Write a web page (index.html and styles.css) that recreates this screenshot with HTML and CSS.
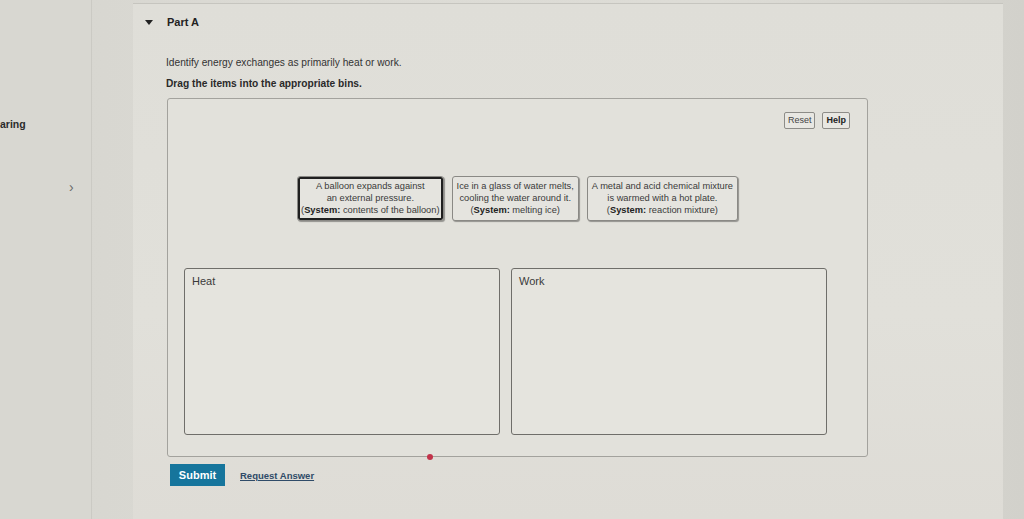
FILE: index.html
```html
<!DOCTYPE html>
<html>
<head>
<meta charset="utf-8">
<link rel="stylesheet" href="styles.css">
</head>
<body>
<div class="page">
  <aside class="sidebar">
    <div class="side-title">aring</div>
    <div class="side-chevron">&#8250;</div>
  </aside>
  <main class="main">
    <section class="part">
      <header class="part-head">
        <span class="tri"></span>
        <span class="part-title">Part A</span>
      </header>
      <div class="part-body">
        <p class="instr">Identify energy exchanges as primarily heat or work.</p>
        <p class="instr strong">Drag the items into the appropriate bins.</p>
        <div class="panel">
          <div class="toolbar">
            <button class="tbtn">Reset</button>
            <button class="tbtn bold">Help</button>
          </div>
          <div class="cards">
            <div class="card selected">A balloon expands against<br>an external pressure.<br>(<b>System:</b> contents of the balloon)</div>
            <div class="card">Ice in a glass of water melts,<br>cooling the water around it.<br>(<b>System:</b> melting ice)</div>
            <div class="card">A metal and acid chemical mixture<br>is warmed with a hot plate.<br>(<b>System:</b> reaction mixture)</div>
          </div>
          <div class="bins">
            <div class="bin"><span class="bin-label">Heat</span></div>
            <div class="bin"><span class="bin-label">Work</span></div>
          </div>
          <span class="dot"></span>
        </div>
        <div class="actions">
          <button class="submit">Submit</button>
          <a class="request" href="#">Request Answer</a>
        </div>
      </div>
    </section>
  </main>
</div>
</body>
</html>
```
FILE: styles.css
```css
html, body {
  margin: 0;
  padding: 0;
}
body {
  width: 1024px;
  height: 519px;
  overflow: hidden;
  font-family: "Liberation Sans", Arial, sans-serif;
  color: #2a2a2a;
  background: linear-gradient(90deg, #d6d5cf 0%, #dcdbd5 30%, #dddcd6 70%, #d2d1cb 100%);
}
.page {
  display: flex;
  height: 519px;
}
.sidebar {
  width: 91px;
  flex: none;
  border-right: 1px solid #cbcac4;
  background: #d8d7d1;
}
.side-title {
  margin-top: 118px;
  font-size: 10.5px;
  font-weight: bold;
  color: #2b2b2b;
}
.side-chevron {
  margin-top: 50px;
  margin-left: 69px;
  font-size: 14px;
  line-height: 14px;
  color: #6a6a6a;
}
.main {
  flex: 1;
  padding-top: 3px;
  padding-left: 41px;
}
.part {
  width: 870px;
  border-top: 1px solid #c6c5bf;
  height: 515px;
  background: linear-gradient(180deg, #dfded8 0%, #e1e0da 60%, #dedcd6 100%);
}
.part-head {
  display: flex;
  align-items: center;
  height: 36px;
  padding-left: 12px;
}
.tri {
  width: 0;
  height: 0;
  border-left: 4px solid transparent;
  border-right: 4px solid transparent;
  border-top: 5px solid #222;
  margin-right: 14px;
}
.part-title {
  font-size: 11px;
  font-weight: bold;
  color: #222;
}
.part-body {
  padding-left: 33px;
  padding-top: 16px;
}
.instr {
  margin: 0 0 7px 0;
  font-size: 10.2px;
  line-height: 14px;
  color: #333;
}
.instr.strong {
  font-weight: bold;
  color: #2a2a2a;
  margin-bottom: 7px;
}
.panel {
  position: relative;
  margin-left: 1px;
  width: 699px;
  height: 357px;
  border: 1px solid #a3a29d;
  border-radius: 3px;
  background: #e2e1db;
}
.toolbar {
  display: flex;
  justify-content: flex-end;
  gap: 7px;
  padding: 13px 17px 0 0;
}
.tbtn {
  font-family: "Liberation Sans", Arial, sans-serif;
  font-size: 9px;
  height: 17px;
  padding: 0 3px;
  border: 1px solid #8d8c88;
  border-radius: 2px;
  background: #e8e7e2;
  color: #444;
  line-height: 15px;
}
.tbtn.bold {
  font-weight: bold;
  color: #222;
}
.cards {
  display: flex;
  justify-content: center;
  gap: 8px;
  margin-top: 47px;
}
.card {
  height: 45px;
  box-sizing: border-box;
  padding: 4px 4px 0;
  border: 1px solid #8a8985;
  border-radius: 3px;
  background: #e5e4df;
  box-shadow: 1px 1px 1px rgba(0,0,0,0.35);
  font-size: 9.3px;
  line-height: 11.8px;
  text-align: center;
  color: #3a3a3a;
  white-space: nowrap;
}
.card b {
  color: #222;
}
.card.selected {
  box-shadow: inset 0 0 0 2px #1f1f1f, 1px 1px 1px rgba(0,0,0,0.35);
  padding: 4px 3px 0;
}
.bins {
  display: flex;
  gap: 11px;
  margin-top: 47px;
  margin-left: 16px;
}
.bin {
  width: 316px;
  height: 167px;
  box-sizing: border-box;
  border: 1px solid #6f6e6a;
  border-radius: 3px;
  background: #e5e4de;
  padding: 2px 7px;
}
.bin-label {
  font-size: 11px;
  color: #3a3a3a;
}
.dot {
  position: absolute;
  left: 259px;
  bottom: -4px;
  width: 6px;
  height: 6px;
  border-radius: 50%;
  background: #c2334a;
}
.actions {
  display: flex;
  align-items: center;
  gap: 15px;
  margin-top: 7px;
  margin-left: 4px;
}
.submit {
  font-family: "Liberation Sans", Arial, sans-serif;
  width: 55px;
  height: 22px;
  border: none;
  background: #16759c;
  color: #fff;
  font-size: 11px;
  font-weight: bold;
  padding: 0;
}
.request {
  font-size: 9.5px;
  font-weight: bold;
  color: #2f4b68;
  text-decoration: underline;
}
```
